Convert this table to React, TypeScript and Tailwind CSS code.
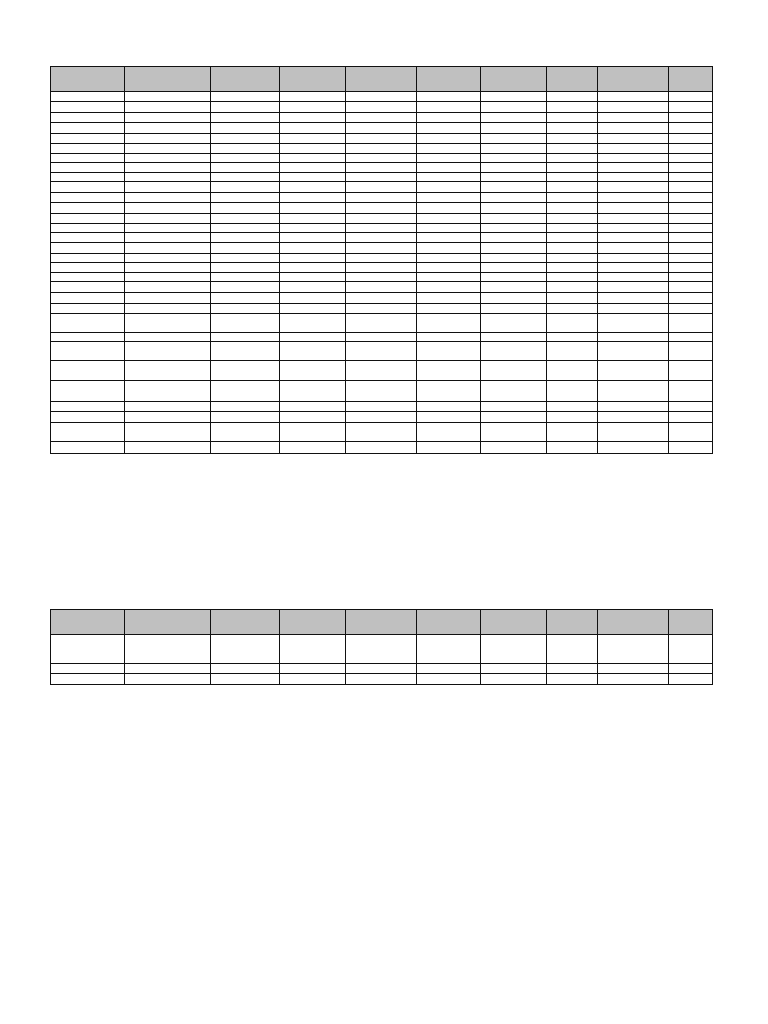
import React from 'react';

const colWidths = [74, 86, 69, 66, 71, 64, 66, 51, 71, 44];

const mainRows = [10, 11, 10, 11, 10, 10, 9, 10, 9, 11, 10, 11, 10, 9, 10, 11, 9, 10, 9, 11, 11, 10, 19, 9, 19, 20, 21, 10, 11, 19, 12];
const summaryRows = [29, 10, 11];

const GridRow: React.FC<{ height: number; header?: boolean }> = ({ height, header }) => (
    <div className="flex" style={{ height }}>
        {colWidths.map((w, i) => (
            <div
                key={i}
                className={`border-r border-b border-[#111] ${header ? 'bg-[#c0c0c0]' : 'bg-white'}`}
                style={{ width: w }}
            />
        ))}
    </div>
);

const Sheet: React.FC<{ rows: number[]; className?: string }> = ({ rows, className }) => (
    <div className={`w-[663px] border-l border-t border-[#111] ${className ?? ''}`}>
        <GridRow height={25} header />
        {rows.map((h, i) => (
            <GridRow key={i} height={h} />
        ))}
    </div>
);

const App: React.FC = () => {
    return (
        <div className="min-h-[1024px] w-[768px] bg-white pt-[66px] pl-[50px]">
            <Sheet rows={mainRows} />
            <Sheet rows={summaryRows} className="mt-[155px]" />
        </div>
    );
};

export default App;
